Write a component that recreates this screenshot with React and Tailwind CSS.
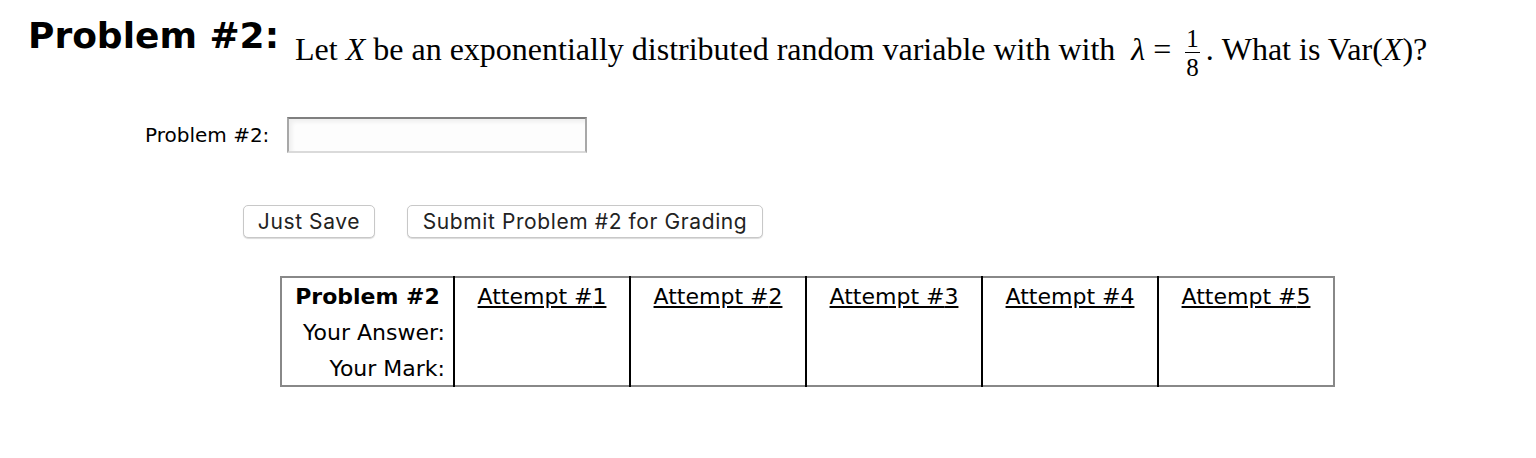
import React from 'react';

const attempts = [1, 2, 3, 4, 5];

const Fraction = ({ top, bottom }) => (
  <span className="inline-flex flex-col items-center align-middle mx-[6px] text-[25px] leading-none">
    <span className="px-[1px] pb-[1px]">{top}</span>
    <span className="w-full border-t border-black" />
    <span className="px-[1px] pt-[2px]">{bottom}</span>
  </span>
);

export default function App() {
  return (
    <div className="w-[1536px] h-[458px] bg-white text-black font-['DejaVu_Sans',sans-serif]">
      <div className="flex items-start pl-[28px] pt-[14px]">
        <h1 className="text-[36px] font-bold leading-[44px]">Problem #2:</h1>
        <p className="ml-[16px] mt-[12px] font-['Liberation_Serif',serif] text-[32px] leading-[44px]">
          Let <i>X</i> be an exponentially distributed random variable with with&nbsp;{' '}
          <i>λ</i> = <Fraction top="1" bottom="8" />. What is Var(<i>X</i>)?
        </p>
      </div>

      <div className="flex items-center mt-[37px] pl-[145px]">
        <label className="text-[20px]">Problem #2:</label>
        <input
          type="text"
          className="ml-[18px] w-[300px] h-[36px] bg-[#fdfdfd] border-2 border-t-[#7f7f7f] border-x-[#a8a8a8] border-b-[#dadada] shadow-[inset_3px_3px_4px_rgba(0,0,0,0.06)]"
        />
      </div>

      <div className="flex gap-[32px] mt-[52px] pl-[243px] font-['Inter',sans-serif]">
        <button type="button" className="w-[132px] h-[33px] rounded-[5px] border border-[#c8c8c8] bg-white text-[21px] tracking-[0.6px] text-[#222] shadow-[0_1px_1px_rgba(0,0,0,0.15)]">
          Just Save
        </button>
        <button type="button" className="w-[356px] h-[33px] rounded-[5px] border border-[#c8c8c8] bg-white text-[21px] tracking-[0.6px] text-[#222] shadow-[0_1px_1px_rgba(0,0,0,0.15)]">
          Submit Problem #2 for Grading
        </button>
      </div>

      <table className="ml-[280px] mt-[38px] border-collapse border-2 border-[#888] text-[22px]">
        <tbody>
          <tr className="h-[37px]">
            <th className="w-[173px] text-center font-bold border-r-2 border-black">Problem #2</th>
            {attempts.map((n) => (
              <td key={n} className={`w-[176px] text-center ${n < 5 ? 'border-r-2 border-black' : ''}`}>
                <a href="#" className="underline">Attempt #{n}</a>
              </td>
            ))}
          </tr>
          <tr className="h-[37px]">
            <th className="text-right pr-[8px] font-normal border-r-2 border-black">Your Answer:</th>
            {attempts.map((n) => (
              <td key={n} className={n < 5 ? 'border-r-2 border-black' : ''} />
            ))}
          </tr>
          <tr className="h-[35px]">
            <th className="text-right pr-[8px] font-normal border-r-2 border-black">Your Mark:</th>
            {attempts.map((n) => (
              <td key={n} className={n < 5 ? 'border-r-2 border-black' : ''} />
            ))}
          </tr>
        </tbody>
      </table>
    </div>
  );
}
